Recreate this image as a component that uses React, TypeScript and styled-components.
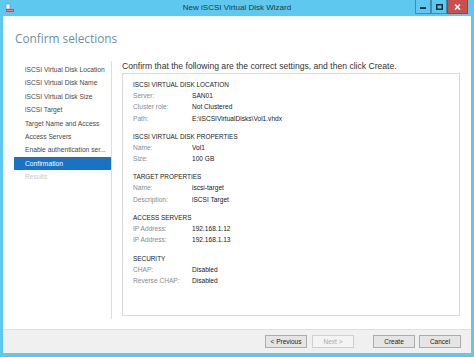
import React from 'react';
import styled, { createGlobalStyle } from 'styled-components';

const GlobalStyle = createGlobalStyle`
  html, body {
    margin: 0;
    padding: 0;
    background: #5ec8ee;
  }
  body {
    font-family: "Liberation Sans", "DejaVu Sans", sans-serif;
  }
`;

const Window = styled.div`
  width: 474px;
  height: 357px;
  box-sizing: border-box;
  background: #5ec8ee;
  padding: 0 3px 4px 3px;
  display: flex;
  flex-direction: column;
`;

const TitleBar = styled.div`
  height: 16px;
  display: flex;
  align-items: flex-start;
  position: relative;
`;

const AppIcon = styled.svg`
  margin: 3px 0 0 2px;
`;

const Title = styled.div`
  position: absolute;
  left: 0;
  right: 0;
  top: 3px;
  text-align: center;
  font-size: 8px;
  color: #1d3a4a;
`;

const Controls = styled.div`
  margin-left: auto;
  margin-right: 3px;
  display: flex;
  position: relative;
`;

const CtlButton = styled.div<{ $close?: boolean; $w: number }>`
  width: ${({ $w }) => $w}px;
  height: 14px;
  box-sizing: border-box;
  border: 1px solid ${({ $close }) => ($close ? '#a73a3a' : '#3f8eb0')};
  border-top: none;
  background: ${({ $close }) => ($close ? '#c9504d' : '#5ec8ee')};
  display: flex;
  align-items: center;
  justify-content: center;
`;

const Body = styled.div`
  flex: 1;
  background: #fff;
  display: flex;
  flex-direction: column;
`;

const Heading = styled.h1`
  margin: 0;
  padding: 14px 0 0 12px;
  height: 32px;
  box-sizing: border-box;
  font-weight: normal;
  font-size: 11.8px;
  color: #6b90a6;
  font-family: "Open Sans", "Liberation Sans", sans-serif;
`;

const Main = styled.div`
  flex: 1;
  display: flex;
  padding-top: 13px;
`;

const Nav = styled.div`
  width: 97px;
  margin-left: 11px;
  border-right: 1px solid #dedede;
  display: flex;
  flex-direction: column;
  padding-top: 2px;
`;

const NavItem = styled.div<{ $active?: boolean; $disabled?: boolean }>`
  height: 13.4px;
  line-height: 13.4px;
  padding-left: 11px;
  font-size: 6.7px;
  white-space: nowrap;
  overflow: hidden;
  text-overflow: ellipsis;
  background: ${({ $active }) => ($active ? '#1a72c4' : 'transparent')};
  color: ${({ $active, $disabled }) => ($active ? '#fff' : $disabled ? '#c8c8c8' : '#4a4a4a')};
`;

const Content = styled.div`
  flex: 1;
  padding: 0 11px 0 10px;
  display: flex;
  flex-direction: column;
`;

const Intro = styled.div`
  font-size: 8.6px;
  color: #333;
  height: 10px;
  line-height: 10px;
  white-space: nowrap;
`;

const SummaryBox = styled.div`
  margin-top: 2px;
  height: 243px;
  border: 1px solid #d9d9d9;
  box-sizing: border-box;
  padding: 5px 10px;
`;

const Section = styled.div`
  margin-bottom: 7px;
`;

const SectionTitle = styled.div`
  font-size: 6.4px;
  color: #222;
  height: 11px;
  line-height: 11px;
`;

const Row = styled.div`
  display: grid;
  grid-template-columns: 59px 1fr;
  font-size: 6.6px;
  height: 11.3px;
  line-height: 11.3px;
`;

const Label = styled.span`
  color: #8a8a8a;
`;

const Value = styled.span`
  color: #222;
`;

const Footer = styled.div`
  height: 23px;
  margin-top: 10px;
  background: #f0f0f0;
  border-top: 1px solid #dfdfdf;
  display: flex;
  align-items: center;
  justify-content: flex-end;
  padding-right: 10px;
`;

const Button = styled.div<{ $disabled?: boolean; $gap?: number }>`
  width: 42px;
  height: 13px;
  box-sizing: border-box;
  margin-left: ${({ $gap }) => $gap ?? 4}px;
  border: 1px solid ${({ $disabled }) => ($disabled ? '#cfcfcf' : '#acacac')};
  background: ${({ $disabled }) => ($disabled ? '#f4f4f4' : '#e5e5e5')};
  color: ${({ $disabled }) => ($disabled ? '#a8a8a8' : '#222')};
  font-size: 6.5px;
  display: flex;
  align-items: center;
  justify-content: center;
`;

const navItems = [
  'iSCSI Virtual Disk Location',
  'iSCSI Virtual Disk Name',
  'iSCSI Virtual Disk Size',
  'iSCSI Target',
  'Target Name and Access',
  'Access Servers',
  'Enable authentication ser...',
  'Confirmation',
  'Results',
];

const sections: { title: string; rows: [string, string][] }[] = [
  {
    title: 'ISCSI VIRTUAL DISK LOCATION',
    rows: [
      ['Server:', 'SAN01'],
      ['Cluster role:', 'Not Clustered'],
      ['Path:', 'E:\\iSCSIVirtualDisks\\Vol1.vhdx'],
    ],
  },
  {
    title: 'ISCSI VIRTUAL DISK PROPERTIES',
    rows: [
      ['Name:', 'Vol1'],
      ['Size:', '100 GB'],
    ],
  },
  {
    title: 'TARGET PROPERTIES',
    rows: [
      ['Name:', 'iscsi-target'],
      ['Description:', 'iSCSI Target'],
    ],
  },
  {
    title: 'ACCESS SERVERS',
    rows: [
      ['IP Address:', '192.168.1.12'],
      ['IP Address:', '192.168.1.13'],
    ],
  },
  {
    title: 'SECURITY',
    rows: [
      ['CHAP:', 'Disabled'],
      ['Reverse CHAP:', 'Disabled'],
    ],
  },
];

const App: React.FC = () => {
  return (
    <>
      <GlobalStyle />
      <Window>
        <TitleBar>
          <AppIcon width="10" height="10" viewBox="0 0 10 10">
            <rect x="1" y="1" width="4" height="5" fill="#f4f4f4" stroke="#7a8a96" strokeWidth="0.6" />
            <rect x="1" y="6" width="8" height="3" fill="#c8485a" />
            <rect x="2" y="7" width="6" height="1" fill="#e88a96" />
          </AppIcon>
          <Title>New iSCSI Virtual Disk Wizard</Title>
          <Controls>
            <CtlButton $w={16}>
              <svg width="6" height="6" viewBox="0 0 6 6">
                <rect y="3" width="6" height="2" fill="#1a2d3a" />
              </svg>
            </CtlButton>
            <CtlButton $w={16}>
              <svg width="7" height="6" viewBox="0 0 7 6">
                <rect x="0.75" y="0.75" width="5.5" height="4.5" fill="none" stroke="#1a2d3a" strokeWidth="1.5" />
              </svg>
            </CtlButton>
            <CtlButton $w={21} $close>
              <svg width="7" height="6" viewBox="0 0 7 6">
                <path d="M1 0.5 L6 5.5 M6 0.5 L1 5.5" stroke="#fff" strokeWidth="1.6" />
              </svg>
            </CtlButton>
          </Controls>
        </TitleBar>
        <Body>
          <Heading>Confirm selections</Heading>
          <Main>
            <Nav>
              {navItems.map((item) => (
                <NavItem
                  key={item}
                  $active={item === 'Confirmation'}
                  $disabled={item === 'Results'}
                >
                  {item}
                </NavItem>
              ))}
            </Nav>
            <Content>
              <Intro>Confirm that the following are the correct settings, and then click Create.</Intro>
              <SummaryBox>
                {sections.map((s) => (
                  <Section key={s.title}>
                    <SectionTitle>{s.title}</SectionTitle>
                    {s.rows.map(([label, value], i) => (
                      <Row key={i}>
                        <Label>{label}</Label>
                        <Value>{value}</Value>
                      </Row>
                    ))}
                  </Section>
                ))}
              </SummaryBox>
            </Content>
          </Main>
          <Footer>
            <Button>&lt; Previous</Button>
            <Button $disabled $gap={5}>Next &gt;</Button>
            <Button $gap={19}>Create</Button>
            <Button>Cancel</Button>
          </Footer>
        </Body>
      </Window>
    </>
  );
};

export default App;
